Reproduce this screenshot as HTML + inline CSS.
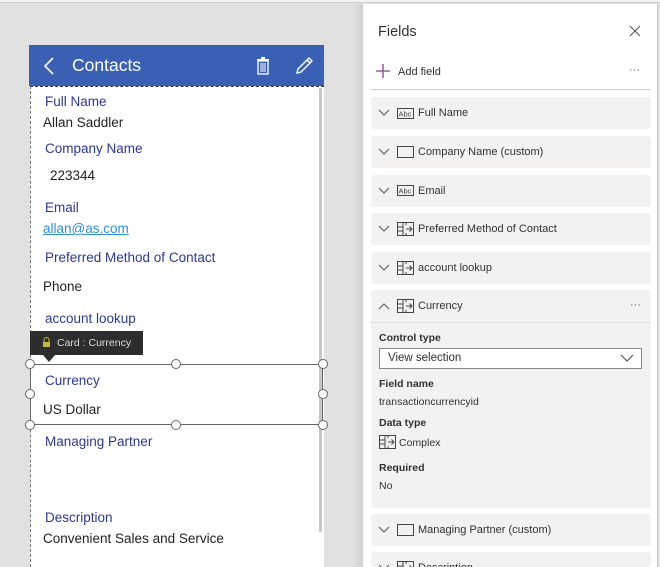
<!DOCTYPE html>
<html style="overflow:hidden;width:660px;height:567px"><head><style>
*{margin:0;padding:0;box-sizing:border-box}
body{width:660px;height:567px;overflow:hidden;background:#e1e1e1;font-family:"Liberation Sans",sans-serif;position:relative}
.abs{position:absolute}
.lbl{position:absolute;left:45px;color:#2b3990;font-size:13.5px}
.val{position:absolute;left:43px;color:#222;font-size:13.5px}
.card{position:absolute;left:371px;width:280px;height:32px;background:#f3f2f1;border-radius:3px;font-size:11px;color:#323130;overflow:hidden}
.card .t{position:absolute;left:47px;top:10px}
.chev{position:absolute;left:7px;top:12px}
.ic{position:absolute;left:26px;top:10px}
.h{position:absolute;left:379px;font-size:10.5px;font-weight:bold;color:#323130}
.s{position:absolute;left:379px;font-size:10.5px;color:#323130}
.hd{position:absolute;width:10px;height:10px;border:1px solid #666;border-radius:50%;background:#fff}
</style></head><body>
<div class="abs" style="left:0;top:0;width:660px;height:3px;background:#f2f2f2;border-bottom:1px solid #cfcfcf"></div>
<div class="abs" style="left:29px;top:45px;width:295px;height:41px;background:#3a60b3"></div>
<svg class="abs" style="left:42px;top:56px" width="14" height="20"><path d="M11 2 L3 10 L11 18" stroke="#fff" stroke-width="1.6" fill="none"/></svg>
<div class="abs" style="left:72px;top:55px;color:#fff;font-size:17.5px">Contacts</div>
<svg class="abs" style="left:255px;top:56px" width="16" height="20"><rect x="2" y="3" width="12" height="1.5" fill="#fff"/><rect x="6" y="1" width="4" height="2" fill="#fff"/><rect x="3" y="5" width="10" height="13" fill="none" stroke="#fff" stroke-width="1.3"/><path d="M6 7V16M8 7V16M10 7V16" stroke="#fff" stroke-width="1"/></svg>
<svg class="abs" style="left:294px;top:56px" width="20" height="20"><path d="M3 17 L4 13 L15 2 L18 5 L7 16 Z M13 4 L16 7" stroke="#fff" stroke-width="1.4" fill="none"/></svg>
<div class="abs" style="left:30px;top:86px;width:294px;height:481px;background:#fff;border-left:1px dashed #777;border-top:1px dashed #333"></div>
<div class="abs" style="left:319px;top:88px;width:3px;height:444px;background:#c8c8c8"></div>
<div class="lbl" style="top:94px">Full Name</div>
<div class="val" style="top:115px">Allan Saddler</div>
<div class="lbl" style="top:141px">Company Name</div>
<div class="val" style="top:168px;left:50px">223344</div>
<div class="lbl" style="top:200px">Email</div>
<div class="val" style="top:221px;color:#2e8fd8;text-decoration:underline">allan@as.com</div>
<div class="lbl" style="top:250px">Preferred Method of Contact</div>
<div class="val" style="top:279px">Phone</div>
<div class="lbl" style="top:311px">account lookup</div>
<div class="abs" style="left:30px;top:331px;width:113px;height:24px;background:#2d2d2d"></div>
<div class="abs" style="left:43px;top:355px;width:0;height:0;border-left:6px solid transparent;border-right:6px solid transparent;border-top:7px solid #2d2d2d"></div>
<svg class="abs" style="left:42px;top:337px" width="9" height="10"><path d="M2 5V3a2.5 2.5 0 0 1 5 0v2" stroke="#c9b44a" fill="none"/><rect x="1" y="5" width="7" height="5" fill="#c9b44a"/></svg>
<div class="abs" style="left:57px;top:337px;color:#ddd;font-size:10.5px">Card : Currency</div>
<div class="abs" style="left:30px;top:364px;width:293px;height:61px;border:1px solid #666"></div>
<div class="hd" style="left:25px;top:359px"></div><div class="hd" style="left:171px;top:359px"></div><div class="hd" style="left:318px;top:359px"></div>
<div class="hd" style="left:25px;top:389px"></div><div class="hd" style="left:318px;top:389px"></div>
<div class="hd" style="left:25px;top:420px"></div><div class="hd" style="left:171px;top:420px"></div><div class="hd" style="left:318px;top:420px"></div>
<div class="lbl" style="top:373px">Currency</div>
<div class="val" style="top:402px">US Dollar</div>
<div class="lbl" style="top:434px">Managing Partner</div>
<div class="lbl" style="top:510px">Description</div>
<div class="val" style="top:531px">Convenient Sales and Service</div>
<div class="abs" style="left:354px;top:4px;width:9px;height:563px;background:linear-gradient(90deg,#e1e1e1,#cfcfcf)"></div>
<div class="abs" style="left:363px;top:4px;width:295px;height:563px;background:#fff"></div>
<div class="abs" style="left:657px;top:4px;width:1px;height:563px;background:#c8c8c8"></div>
<div class="abs" style="left:378px;top:24px;font-size:14.5px;color:#323130">Fields</div>
<svg class="abs" style="left:629px;top:25px" width="12" height="12"><path d="M1 1L11 11M11 1L1 11" stroke="#555" stroke-width="1.1"/></svg>
<svg class="abs" style="left:375px;top:63px" width="16" height="16"><path d="M8 1V15M1 8H15" stroke="#8a3d8a" stroke-width="1.3"/></svg>
<div class="abs" style="left:398px;top:66px;font-size:11px;color:#323130">Add field</div>
<div class="abs" style="left:629px;top:64px;font-size:11px;color:#666">···</div>
<div class="abs" style="left:371px;top:89px;width:280px;height:1px;background:#d0d0d0"></div>
<svg width="0" height="0" style="position:absolute"><defs>
<g id="dn"><path d="M1 1L6 6L11 1" stroke="#555" fill="none" stroke-width="1"/></g>
<g id="abc"><rect x="0.5" y="0.5" width="16" height="10" fill="none" stroke="#444"/><text x="1.5" y="8.5" font-size="7.5" fill="#444" font-family="Liberation Sans">Abc</text></g>
<g id="box"><rect x="0.5" y="0.5" width="16" height="11" fill="none" stroke="#444"/></g>
<g id="cx"><rect x="0.5" y="0.5" width="16" height="13" fill="none" stroke="#444"/><path d="M6 0.5V13.5M0.5 5H6M0.5 9H6M9 7H15M12.5 4.5L15 7L12.5 9.5M9 0.5V3M9 11V13.5" stroke="#444" fill="none"/></g>
</defs></svg>
<div class="card" style="top:97px"><svg class="chev" width="12" height="8"><use href="#dn"/></svg><svg class="ic" style="top:11px" width="17" height="11"><use href="#abc"/></svg><span class="t">Full Name</span></div>
<div class="card" style="top:136px"><svg class="chev" width="12" height="8"><use href="#dn"/></svg><svg class="ic" width="17" height="12"><use href="#box"/></svg><span class="t">Company Name (custom)</span></div>
<div class="card" style="top:175px"><svg class="chev" width="12" height="8"><use href="#dn"/></svg><svg class="ic" style="top:10px" width="17" height="11"><use href="#abc"/></svg><span class="t">Email</span></div>
<div class="card" style="top:213px"><svg class="chev" width="12" height="8"><use href="#dn"/></svg><svg class="ic" style="top:9px" width="17" height="14"><use href="#cx"/></svg><span class="t">Preferred Method of Contact</span></div>
<div class="card" style="top:252px"><svg class="chev" width="12" height="8"><use href="#dn"/></svg><svg class="ic" style="top:9px" width="17" height="14"><use href="#cx"/></svg><span class="t">account lookup</span></div>
<div class="card" style="top:290px;height:218px"><svg class="chev" width="12" height="8"><path d="M1 7L6 2L11 7" stroke="#555" fill="none"/></svg><svg class="ic" style="top:9px" width="17" height="14"><use href="#cx"/></svg><span class="t">Currency</span><span style="position:absolute;right:10px;top:9px;color:#666">···</span><div style="position:absolute;left:0;top:32px;width:280px;height:1px;background:#ddd"></div></div>
<div class="h" style="top:332px">Control type</div>
<div class="abs" style="left:379px;top:348px;width:263px;height:21px;background:#fff;border:1px solid #8a8886"></div>
<div class="abs" style="left:388px;top:352px;font-size:11.5px;color:#323130">View selection</div>
<svg class="abs" style="left:620px;top:354px" width="14" height="9"><path d="M1 1L7 7L13 1" stroke="#444" fill="none"/></svg>
<div class="h" style="top:378px">Field name</div>
<div class="s" style="top:396px">transactioncurrencyid</div>
<div class="h" style="top:417px">Data type</div>
<svg class="abs" style="left:379px;top:435px" width="17" height="14"><use href="#cx"/></svg>
<div class="s" style="top:437px;left:399px">Complex</div>
<div class="h" style="top:462px">Required</div>
<div class="s" style="top:480px">No</div>
<div class="card" style="top:514px"><svg class="chev" width="12" height="8"><use href="#dn"/></svg><svg class="ic" width="17" height="12"><use href="#box"/></svg><span class="t">Managing Partner (custom)</span></div>
<div class="card" style="top:552px;height:15px"><svg class="chev" width="12" height="8"><use href="#dn"/></svg><svg class="ic" style="top:9px" width="17" height="14"><use href="#cx"/></svg><span class="t">Description</span></div>
</body></html>
